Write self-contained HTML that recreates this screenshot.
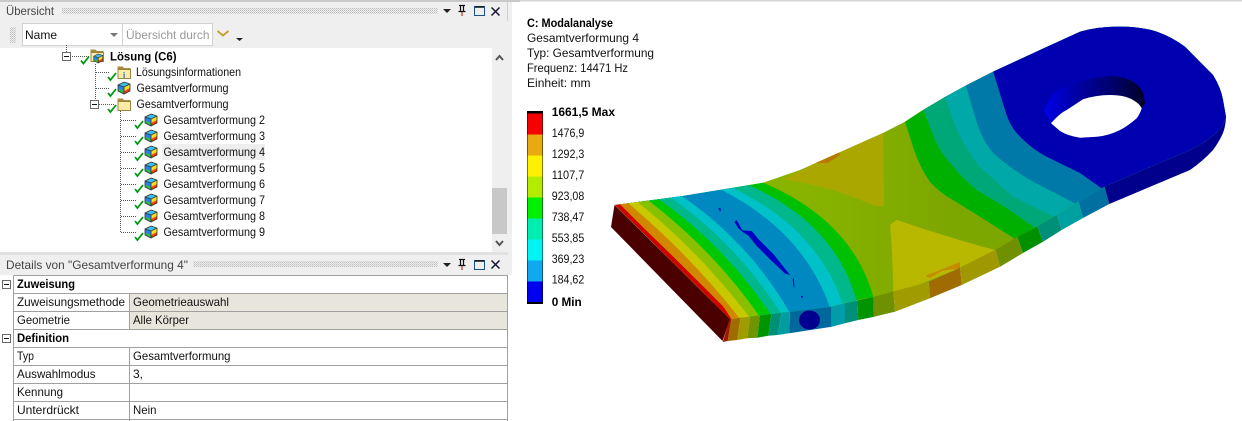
<!DOCTYPE html>
<html><head><meta charset="utf-8"><style>
html,body{margin:0;padding:0;background:#fff;width:1242px;height:421px;overflow:hidden}
svg{display:block}
text{font-family:"Liberation Sans",sans-serif;font-size:12px;fill:#111}
.b{font-weight:bold;fill:#000}
.h{fill:#444}
.g{fill:#9a9a9a}
</style></head><body>
<svg width="1242" height="421" viewBox="0 0 1242 421" xmlns="http://www.w3.org/2000/svg" shape-rendering="geometricPrecision">
<defs>
<pattern id="dots" width="2" height="2" patternUnits="userSpaceOnUse"><rect width="1" height="1" fill="#bdbdbd"/><rect x="1" y="1" width="1" height="1" fill="#d0d0d0"/></pattern>
<linearGradient id="wall" x1="1044" x2="1145" y1="0" y2="0" gradientUnits="userSpaceOnUse"><stop offset="0" stop-color="#0000e8"/><stop offset=".3" stop-color="#0000a8"/><stop offset=".65" stop-color="#000070"/><stop offset="1" stop-color="#000028"/></linearGradient>
<linearGradient id="mid" x1="800" x2="960" y1="0" y2="0" gradientUnits="userSpaceOnUse"><stop offset="0" stop-color="#88b400"/><stop offset="1" stop-color="#7ca600"/></linearGradient>
<clipPath id="face"><path d="M615,205 L683,196 L763,182.7 L800,170 L883,133 L905,121.7 L923,110 L945,97 L965,86 L993,71.7 L1040,50 L1080,31.7 Q1100,26 1123,26.7 Q1142,27 1157,31.7 Q1172,37 1185,46.7 L1213,75 Q1221,88 1223,100 L1226,117 L1222,127 Q1210,140 1190,150 L1104,186.7 L1078,201.7 L1056.7,215 L1036.7,226.7 L1016.7,237.3 L995,250 L959,268 L929,281.7 L873,297 L830,306.7 L730,319 Z"/></clipPath>
<g id="cube"><path d="M1,3 L7,0 L13,2 L7,5 Z" fill="#38c0f0"/><path d="M1,3 L7,5 L7,9 L1,7 Z" fill="#2a80e0"/><path d="M1,7 L7,9 L7,12 L1,9 Z" fill="#20c040"/><path d="M7,5 L13,2 L13,6 L7,9 Z" fill="#f0e020"/><path d="M7,9 L13,6 L13,9 L7,12 Z" fill="#f04010"/><path d="M1,3 L7,0 L13,2 L13,9 L7,12 L1,9 Z M1,3 L7,5 L13,2 M7,5 L7,12" fill="none" stroke="#333" stroke-width=".8"/></g>
<g id="chk"><path d="M0,4 L2.4,7 L8,0" fill="none" stroke="#009a10" stroke-width="1.8"/></g>
<g id="fold"><path d="M0,1.5 H5 L6.5,3 H13 V5 H0 Z" fill="#a88a3a"/><rect x=".5" y="4.5" width="12.5" height="9" fill="#fbeaa6" stroke="#9a8440"/></g>
<g id="minus"><rect x=".5" y=".5" width="8" height="8" fill="#fff" stroke="#6a6a6a"/><path d="M2,4.5 H7" stroke="#111" stroke-width="1"/></g>
<g id="pin"><path d="M2,0.5 H8 M3.5,.5 V6 M6.5,.5 V6 M1.5,6.5 H8.5" stroke="#111" fill="none" stroke-width="1.2"/><path d="M5,7 V11" stroke="#b03030" stroke-width="1.2"/></g>
<g id="max"><rect x=".5" y="1.5" width="10" height="9" fill="none" stroke="#1a4f8a"/><path d="M1,2 H10" stroke="#111" stroke-width="1.5"/></g>
<g id="x"><path d="M.5,.5 L8.5,8.5 M8.5,.5 L.5,8.5" stroke="#151530" stroke-width="1.5"/></g>
</defs>

<rect width="1242" height="421" fill="#fff"/>
<rect width="1242" height="1.5" fill="#d4d4d0"/>
<!-- left panel -->
<rect y="2" width="512" height="273" fill="#efefef"/>
<rect y="0" width="520" height="2" fill="#c9c9c9"/>
<rect x="507" y="2" width="1" height="19" fill="#cfcfd6"/>
<text x="6" y="15" class="h" textLength="48" lengthAdjust="spacingAndGlyphs">Übersicht</text>
<rect x="62" y="8" width="376" height="6" fill="url(#dots)"/>
<path d="M443,9 H451 L447,13 Z" fill="#222"/>
<use href="#pin" x="457" y="5"/><use href="#max" x="474" y="5"/><use href="#x" x="491" y="7"/>
<!-- toolbar -->
<rect x="10" y="27" width="6" height="16" fill="url(#dots)"/>
<rect x="22.500" y="23.500" width="100" height="22" fill="#fff" stroke="#d2d2d2"/>
<text x="25" y="39" fill="#111" textLength="32" lengthAdjust="spacingAndGlyphs">Name</text>
<path d="M110,33 H118 L114,37 Z" fill="#777"/>
<rect x="122.500" y="23.500" width="90" height="22" fill="#fff" stroke="#d2d2d2"/>
<text x="126" y="39" class="g" textLength="83.500" lengthAdjust="spacingAndGlyphs">Übersicht durch</text>
<path d="M217.500,31 L223,35.500 L228.500,31" fill="none" stroke="#c8a030" stroke-width="2"/>
<path d="M236,38 H243 L239.500,41 Z" fill="#222"/>
<!-- tree -->
<rect y="48" width="492" height="204" fill="#fff"/>
<rect x="162" y="144" width="103" height="16" fill="#eeeeee"/>
<g stroke="#555" stroke-dasharray="1 1" stroke-width="1" fill="none">
<path d="M66.500,45 V52 M72,56.500 H90"/>
<path d="M95.500,64 V100 M96,72.500 H110 M96,88.500 H110 M99,104.500 H115"/>
<path d="M120.500,109 V232 M121,120.500 H137 M121,136.500 H137 M121,152.500 H137 M121,168.500 H137 M121,184.500 H137 M121,200.500 H137 M121,216.500 H137 M121,232.500 H137"/>
</g>
<use href="#minus" x="62" y="52"/>
<use href="#minus" x="90" y="100"/>
<use href="#chk" x="81" y="56.500"/><use href="#fold" x="90.500" y="48"/><use href="#cube" transform="translate(93,54) scale(.75)"/>
<text x="110" y="60.500" class="b" textLength="66.500" lengthAdjust="spacingAndGlyphs">Lösung (C6)</text>
<use href="#chk" x="108" y="73"/><use href="#fold" x="117.500" y="65"/><text x="123" y="78" style="font-size:8px;font-weight:bold;fill:#2060c0">i</text>
<text x="136" y="76" textLength="105" lengthAdjust="spacingAndGlyphs">Lösungsinformationen</text>
<use href="#chk" x="108" y="89"/><use href="#cube" x="117" y="82"/>
<text x="136.500" y="92" textLength="92" lengthAdjust="spacingAndGlyphs">Gesamtverformung</text>
<use href="#chk" x="108" y="105"/><use href="#fold" x="117.500" y="97"/>
<text x="136.500" y="108" textLength="92" lengthAdjust="spacingAndGlyphs">Gesamtverformung</text>
<use href="#chk" x="135" y="121"/><use href="#cube" x="144" y="114"/>
<use href="#chk" x="135" y="137"/><use href="#cube" x="144" y="130"/>
<use href="#chk" x="135" y="153"/><use href="#cube" x="144" y="146"/>
<use href="#chk" x="135" y="169"/><use href="#cube" x="144" y="162"/>
<use href="#chk" x="135" y="185"/><use href="#cube" x="144" y="178"/>
<use href="#chk" x="135" y="201"/><use href="#cube" x="144" y="194"/>
<use href="#chk" x="135" y="217"/><use href="#cube" x="144" y="210"/>
<use href="#chk" x="135" y="233"/><use href="#cube" x="144" y="226"/>
<text x="163.500" y="124" textLength="101.500" lengthAdjust="spacingAndGlyphs">Gesamtverformung 2</text>
<text x="163.500" y="140" textLength="101.500" lengthAdjust="spacingAndGlyphs">Gesamtverformung 3</text>
<text x="163.500" y="156" textLength="101.500" lengthAdjust="spacingAndGlyphs">Gesamtverformung 4</text>
<text x="163.500" y="172" textLength="101.500" lengthAdjust="spacingAndGlyphs">Gesamtverformung 5</text>
<text x="163.500" y="188" textLength="101.500" lengthAdjust="spacingAndGlyphs">Gesamtverformung 6</text>
<text x="163.500" y="204" textLength="101.500" lengthAdjust="spacingAndGlyphs">Gesamtverformung 7</text>
<text x="163.500" y="220" textLength="101.500" lengthAdjust="spacingAndGlyphs">Gesamtverformung 8</text>
<text x="163.500" y="236" textLength="101.500" lengthAdjust="spacingAndGlyphs">Gesamtverformung 9</text>
<!-- scrollbar -->
<rect x="492" y="188" width="15" height="46" fill="#c8c8c8"/>
<path d="M496,60 L499.500,56 L503,60" fill="none" stroke="#555" stroke-width="2"/>
<path d="M496,241 L499.500,245 L503,241" fill="none" stroke="#555" stroke-width="2"/>
<!-- details header -->
<rect y="252" width="508" height="3" fill="#e2e2e4"/>
<text x="6" y="269" class="h" textLength="182" lengthAdjust="spacingAndGlyphs">Details von "Gesamtverformung 4"</text>
<rect x="193" y="261" width="245" height="6" fill="url(#dots)"/>
<path d="M443,263 H451 L447,267 Z" fill="#222"/>
<use href="#pin" x="457" y="259"/><use href="#max" x="474" y="259"/><use href="#x" x="491" y="260"/>
<!-- table -->
<rect y="275" width="512" height="146" fill="#fff"/>
<rect x="129" y="293" width="378" height="36" fill="#e8e6dc"/>
<g fill="none" stroke="#a0a0a0" stroke-width="1">
<path d="M13.500,275.500 H507.500 V421 M13.500,275.500 V421"/>
<path d="M14,293.500 H507 M14,311.500 H507 M14,329.500 H507 M14,347.500 H507 M14,365.500 H507 M14,383.500 H507 M14,401.500 H507 M14,419.500 H507"/>
<path d="M129.500,293 V329 M129.500,347 V421"/>
</g>
<use href="#minus" x="2" y="280"/><use href="#minus" x="2" y="334"/>
<text x="17" y="288" class="b" textLength="58" lengthAdjust="spacingAndGlyphs">Zuweisung</text>
<text x="17" y="306" textLength="108" lengthAdjust="spacingAndGlyphs">Zuweisungsmethode</text>
<text x="133" y="306" textLength="96" lengthAdjust="spacingAndGlyphs">Geometrieauswahl</text>
<text x="17" y="324" textLength="53" lengthAdjust="spacingAndGlyphs">Geometrie</text>
<text x="133" y="324" textLength="56" lengthAdjust="spacingAndGlyphs">Alle Körper</text>
<text x="17" y="342" class="b" textLength="52" lengthAdjust="spacingAndGlyphs">Definition</text>
<text x="17" y="360" textLength="17" lengthAdjust="spacingAndGlyphs">Typ</text>
<text x="133" y="360" textLength="97.500" lengthAdjust="spacingAndGlyphs">Gesamtverformung</text>
<text x="17" y="378" textLength="78.500" lengthAdjust="spacingAndGlyphs">Auswahlmodus</text>
<text x="133" y="378">3,</text>
<text x="17" y="396" textLength="46" lengthAdjust="spacingAndGlyphs">Kennung</text>
<text x="17" y="414" textLength="62" lengthAdjust="spacingAndGlyphs">Unterdrückt</text>
<text x="133" y="414" textLength="23.500" lengthAdjust="spacingAndGlyphs">Nein</text>

<!-- legend text -->
<text x="527" y="27" class="b" textLength="86" lengthAdjust="spacingAndGlyphs">C: Modalanalyse</text>
<text x="527" y="42" textLength="112" lengthAdjust="spacingAndGlyphs">Gesamtverformung 4</text>
<text x="527" y="57" textLength="127" lengthAdjust="spacingAndGlyphs">Typ: Gesamtverformung</text>
<text x="527" y="72" textLength="101" lengthAdjust="spacingAndGlyphs">Frequenz: 14471 Hz</text>
<text x="527" y="87" textLength="63.500" lengthAdjust="spacingAndGlyphs">Einheit: mm</text>
<!-- legend bar -->
<rect x="527" y="111" width="16" height="193" fill="#000"/>
<rect x="527.500" y="113.500" width="15" height="21" fill="#f60000"/>
<rect x="527.500" y="134.500" width="15" height="21" fill="#e8aa10"/>
<rect x="527.500" y="155.500" width="15" height="21" fill="#fff000"/>
<rect x="527.500" y="176.500" width="15" height="21" fill="#b4ec00"/>
<rect x="527.500" y="197.500" width="15" height="21" fill="#00f000"/>
<rect x="527.500" y="218.500" width="15" height="21" fill="#00eeb0"/>
<rect x="527.500" y="239.500" width="15" height="21" fill="#00f4f4"/>
<rect x="527.500" y="260.500" width="15" height="21" fill="#10a8ee"/>
<rect x="527.500" y="281.500" width="15" height="20.500" fill="#0000f0"/>
<text x="551.700" y="116" class="b" textLength="63.300" lengthAdjust="spacingAndGlyphs">1661,5 Max</text>
<text x="551.700" y="137" textLength="32.600" lengthAdjust="spacingAndGlyphs">1476,9</text>
<text x="551.700" y="158" textLength="32.600" lengthAdjust="spacingAndGlyphs">1292,3</text>
<text x="551.700" y="179" textLength="32.600" lengthAdjust="spacingAndGlyphs">1107,7</text>
<text x="551.700" y="200" textLength="32.600" lengthAdjust="spacingAndGlyphs">923,08</text>
<text x="551.700" y="221" textLength="32.600" lengthAdjust="spacingAndGlyphs">738,47</text>
<text x="551.700" y="242" textLength="32.600" lengthAdjust="spacingAndGlyphs">553,85</text>
<text x="551.700" y="263" textLength="32.600" lengthAdjust="spacingAndGlyphs">369,23</text>
<text x="551.700" y="283.500" textLength="32.600" lengthAdjust="spacingAndGlyphs">184,62</text>
<text x="551.700" y="306" class="b" textLength="30" lengthAdjust="spacingAndGlyphs">0 Min</text>

<!-- 3D part: end face -->
<polygon points="614.500,205 611,227 722.500,341 730,319" fill="#4a0000"/>
<!-- side bands -->
<polygon points="730,317.500 731.700,317.500 727.700,341 722.700,342" fill="#a01800"/>
<polygon points="731.700,317.500 740.700,316.800 737.300,340 727.700,341" fill="#a06c00"/>
<polygon points="740.700,316.800 750,315.200 747.300,338.300 737.300,340" fill="#a09c00"/>
<polygon points="750,315.200 760,314.200 757.300,337.700 747.300,338.300" fill="#6e9400"/>
<polygon points="760,314.200 771.700,312.800 768.300,335.700 757.300,337.700" fill="#009400"/>
<polygon points="771.700,312.800 781.700,311.800 777.700,335 768.300,335.700" fill="#009078"/>
<polygon points="781.700,311.800 790,310.200 789.300,333.300 777.700,335" fill="#009ca0"/>
<polygon points="790,310.200 831.700,305.200 831.700,326.700 789.300,333.300" fill="#00689c"/>
<polygon points="831.700,305.200 845,302.800 845,323.300 831.700,326.700" fill="#009ca8"/>
<polygon points="845,302.800 857.300,300.200 858.300,320 845,323.300" fill="#00907a"/>
<polygon points="857.300,300.200 873.300,295.700 874,316.700 858.300,320" fill="#009400"/>
<polygon points="873.300,295.700 893.300,289.700 895,311.700 874,316.700" fill="#6f9000"/>
<polygon points="893.300,289.700 928.300,278 930,298.300 895,311.700" fill="#a09c00"/>
<polygon points="928.300,278 960,266.300 961.700,285 930,298.300" fill="#a06c00"/>
<polygon points="960,266.300 995,248 1000,266.700 961.700,285" fill="#a09800"/>
<polygon points="995,248 1016.700,235.300 1023,253 1000,266.700" fill="#6f9000"/>
<polygon points="1016.700,235.300 1036.700,224.700 1043,241.700 1023,253" fill="#009000"/>
<polygon points="1036.700,224.700 1056.700,213 1061.700,230 1043,241.700" fill="#00907a"/>
<polygon points="1056.700,213 1078,199.700 1083,218 1061.700,230" fill="#00a0a0"/>
<polygon points="1078,199.700 1104,184.700 1109.300,204 1083,218" fill="#0070a0"/>
<path d="M1104,185 L1190,148 Q1212,138 1222,125 L1226,115 Q1226,125 1223,133 Q1219,142 1213,150 Q1203,161 1190,170 L1109.300,204 Z" fill="#00008c"/>
<ellipse cx="809.500" cy="320" rx="10.500" ry="9.500" fill="#000090"/>

<!-- top face bands -->
<g clip-path="url(#face)">
<rect x="600" y="0" width="642" height="350" fill="url(#mid)"/>
<!-- yellow patches -->
<path d="M782.700,179.300 L883.300,130 L884,206 L875,206 Q830,186 782.700,179.300 Z" fill="#aaa800"/>
<path d="M890,225 L896.700,220 Q950,238 995,250 L960,268 L893.300,295 Q893,258 890,225 Z" fill="#b8b800"/>
<path d="M930,278 L942,270.700 L960,268.300 L960,262 L925,276 Z" fill="#c48a00"/>
<path d="M816.700,163.300 L828,162.700 L840,155 L838,150 L812,160 Z" fill="#b87800"/>
<!-- left side (painter order) -->
<path d="M763.300,182.700 Q851.700,220.300 873.300,296.700 L600,350 L600,150 Z" fill="#00c000"/>
<path d="M748.300,185 Q835,223 856.700,301 L600,350 L600,150 Z" fill="#00b88c"/>
<path d="M733.300,188.300 Q818,229 843,305 L600,350 L600,150 Z" fill="#00c0c8"/>
<path d="M721.700,190 Q804,232 830,308 L600,350 L600,150 Z" fill="#0088c0"/>
<path d="M681.700,196 Q750,243 790,313 L600,350 L600,150 Z" fill="#00c0c8"/>
<path d="M671.700,198.300 Q739,246 781.700,315 L600,350 L600,150 Z" fill="#00b88c"/>
<path d="M660,200 Q727,248 771.700,316 L600,350 L600,150 Z" fill="#00c800"/>
<path d="M650,201.700 Q714,251 760,317 L600,350 L600,150 Z" fill="#88c000"/>
<path d="M638.300,202.700 Q701,253 750,318 L600,350 L600,150 Z" fill="#c8c800"/>
<path d="M628.300,203.300 Q691,256 741,320 L600,350 L600,150 Z" fill="#d08800"/>
<path d="M620,204.300 L645,229.300 L673.300,256.700 L703.500,286.700 L723.500,306.700 L732,320 L600,350 L600,150 Z" fill="#d00000"/>
<!-- right side -->
<path d="M905,0 V121.700 L913,146.700 Q920,168 930,181.700 Q940,193 953,200 L980,216.700 L1016.700,240 L1242,300 V0 Z" fill="#00b000"/>
<path d="M923.300,0 V110 L935,140 Q942,155 950,163 Q962,178 976.700,190 L1005,207 L1036.700,229 L1242,300 V0 Z" fill="#00a878"/>
<path d="M945,0 V97.300 L955,125 Q968,155 983,170 L1013,196.700 L1056.700,218 L1242,300 V0 Z" fill="#00a8a8"/>
<path d="M966,0 V86 L976,120 Q982,140 993,153 Q1010,168 1030,180 L1078,205 L1242,300 V0 Z" fill="#0078a8"/>
<path d="M993.300,0 V71.700 L1005,110 Q1009,124 1016.700,133 Q1030,148 1046.700,156.700 L1080,173 L1104,190 L1242,300 V0 Z" fill="#0000b0"/>
</g>
<!-- cracks -->
<g fill="#0000c0">
<polygon points="734.300,221.700 736.700,220 741.700,229.300 743.300,230.500 751.700,231 758.300,239 773.300,254 790,275 785,273.500 770,259.300 756.700,246 748.300,235.500 742.700,232 738.300,228.300"/>
<polygon points="718.300,208.300 720.500,208 720.700,211.700 719.500,210.500"/>
<polygon points="792.700,278.300 794,279 794.300,288.300 793.300,286"/>
<rect x="801" y="296" width="2" height="1.500"/>
</g>
<!-- hole -->
<path d="M1051,123.300 L1044.300,111.700 Q1046,104 1050,98.300 Q1054,92 1060,88.300 Q1072,83 1086.700,80 Q1100,76 1113.300,76 Q1125,77 1133.300,81.700 Q1141,87 1143.300,93.300 L1145,103.300 L1141.700,108.300 Z" fill="url(#wall)"/>
<path d="M1051,123.300 Q1060,113 1066.700,110 L1083,99.300 Q1096,95 1110,95 Q1125,95 1133,100 Q1140,104 1141.700,108.300 Q1140,114 1136.700,118.300 Q1128,126 1120,130 Q1108,136 1096.700,136.700 L1080,137.700 Q1068,136 1060,131 Z" fill="#fff"/>
</svg>
</body></html>
